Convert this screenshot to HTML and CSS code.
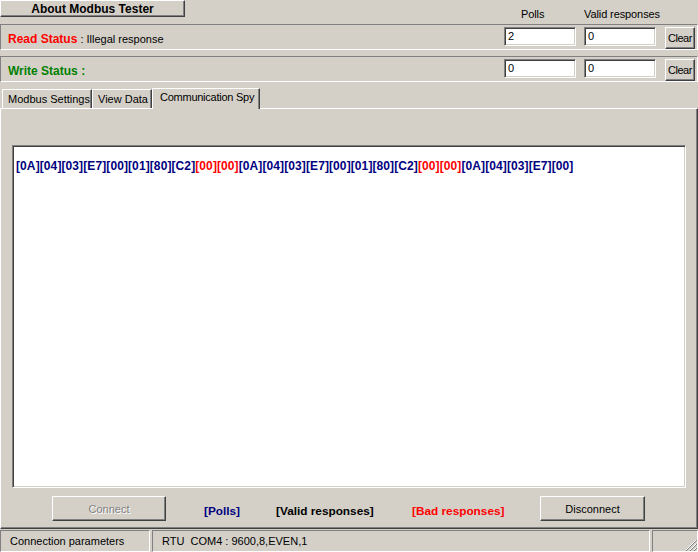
FILE: index.html
```html
<!DOCTYPE html>
<html lang="en">
<head>
    <meta charset="UTF-8">
    <title>Modbus Tester</title>
    <link rel="stylesheet" href="styles.css">
</head>
<body>
    <div class="window">
        <!-- top bar -->
        <div class="topbar">
            <button class="btn about">About Modbus Tester</button>
            <div class="counter-labels">
                <span class="counter-label">Polls</span>
                <span class="counter-label valid-label">Valid responses</span>
            </div>
        </div>

        <!-- read / write status -->
        <div class="status-panel">
            <div class="status-text"><b class="read-label">Read Status</b> : Illegal response</div>
            <div class="counters">
                <div class="field">2</div>
                <div class="field">0</div>
                <button class="btn clear">Clear</button>
            </div>
        </div>

        <div class="status-panel">
            <div class="status-text"><b class="write-label">Write Status :</b></div>
            <div class="counters">
                <div class="field">0</div>
                <div class="field">0</div>
                <button class="btn clear">Clear</button>
            </div>
        </div>

        <!-- tabs -->
        <div class="tabs">
            <div class="tab tab-settings">Modbus Settings</div>
            <div class="tab tab-data">View Data</div>
            <div class="tab active">Communication Spy</div>
        </div>

        <div class="tab-panel">
            <div class="spy-log">
                <div class="spy-line">[0A][04][03][E7][00][01][80][C2]<span class="bad">[00][00]</span>[0A][04][03][E7][00][01][80][C2]<span class="bad">[00][00]</span>[0A][04][03][E7][00]</div>
            </div>

            <div class="spy-actions">
                <button class="btn connect" disabled>Connect</button>
                <span class="legend polls">[Polls]</span>
                <span class="legend valid">[Valid responses]</span>
                <span class="legend badresp">[Bad responses]</span>
                <button class="btn disconnect">Disconnect</button>
            </div>
        </div>

        <!-- status bar -->
        <div class="statusbar">
            <div class="sb-panel sb-name">Connection parameters</div>
            <div class="sb-panel sb-params">RTU&nbsp; COM4 : 9600,8,EVEN,1</div>
            <div class="sb-panel sb-grip">
                <svg class="grip" width="12" height="12" viewBox="0 0 12 12">
                    <path d="M11 1L1 11M11 5L5 11M11 9L9 11" stroke="#ffffff" stroke-width="1"/>
                    <path d="M12 1L1 12M12 5L5 12M12 9L9 12" stroke="#808080" stroke-width="1"/>
                </svg>
            </div>
        </div>
    </div>
</body>
</html>
```

FILE: styles.css
```css
/* base */
body {
    margin: 0;
    background-color: #d4d0c8;
    font-family: 'Liberation Sans', Arial, sans-serif;
    font-size: 11px;
    color: #000000;
    overflow: hidden;
}

.window {
    width: 698px;
    height: 552px;
    display: flex;
    flex-direction: column;
}

/* classic raised button */
.btn {
    background-color: #d4d0c8;
    border: 1px solid;
    border-color: #ffffff #404040 #404040 #ffffff;
    box-shadow: inset -1px -1px #808080;
    font-family: inherit;
    font-size: 11px;
    color: #000000;
    padding: 0;
    margin: 0;
    white-space: nowrap;
}

/* top bar */
.topbar {
    height: 24px;
    display: flex;
    justify-content: space-between;
}

.about {
    width: 185px;
    height: 17px;
    font-size: 12px;
    font-weight: bold;
    line-height: 14px;
}

.counter-labels {
    display: flex;
    padding-top: 8px;
}

.counter-label {
    width: 63px;
    line-height: 13px;
    letter-spacing: -0.1px;
}

.valid-label {
    width: 114px;
}

/* status panels */
.status-panel {
    height: 24px;
    border: 1px solid;
    border-color: #808080 #ffffff #ffffff #808080;
    display: flex;
    justify-content: space-between;
    margin-bottom: 6px;
}

.status-text {
    padding: 7px 0 0 7px;
    line-height: 14px;
    font-size: 11px;
}

.status-text b {
    font-size: 12px;
}

.read-label {
    color: #ff0000;
}

.write-label {
    color: #008000;
}

.counters {
    display: flex;
    align-items: flex-start;
    padding-top: 2px;
    padding-right: 2px;
}

.field {
    width: 67px;
    height: 16px;
    margin-right: 8px;
    background-color: #ffffff;
    border: 1px solid;
    border-color: #808080 #ffffff #ffffff #808080;
    box-shadow: inset 1px 1px #404040, inset -1px -1px #d4d0c8;
    padding: 1px 0 0 3px;
    line-height: 15px;
    font-size: 11px;
}

.field + .field {
    margin-right: 9px;
}

.clear {
    width: 30px;
    height: 22px;
    letter-spacing: -0.5px;
    text-align: center;
}

/* tabs */
.tabs {
    display: flex;
    align-items: flex-end;
    height: 21px;
    margin-top: -1px;
    padding-left: 2px;
}

.tab {
    height: 19px;
    box-sizing: border-box;
    border: 1px solid;
    border-bottom: none;
    border-color: #ffffff #404040 transparent #ffffff;
    box-shadow: inset -1px 0 #808080;
    line-height: 18px;
    padding-left: 5px;
    white-space: nowrap;
}

.tab-settings {
    width: 90px;
}

.tab-data {
    width: 60px;
}

.tab.active {
    width: 108px;
    height: 21px;
    padding-left: 7px;
    line-height: 17px;
    letter-spacing: -0.25px;
    margin-bottom: -1px;
    background-color: #d4d0c8;
    position: relative;
}

/* tab page */
.tab-panel {
    height: 419px;
    border: 1px solid;
    border-color: #ffffff #404040 #404040 #ffffff;
    box-shadow: inset -1px -1px #808080;
    display: flex;
    flex-direction: column;
}

.spy-log {
    height: 341px;
    margin: 36px 11px 0 11px;
    background-color: #ffffff;
    border: 1px solid;
    border-color: #808080 #ffffff #ffffff #808080;
    box-shadow: inset 1px 1px #404040, inset -1px -1px #d4d0c8;
    padding: 0 2px;
}

.spy-line {
    margin-top: 13px;
    font-size: 12px;
    font-weight: bold;
    letter-spacing: 0.1px;
    line-height: 14px;
    color: #000080;
    padding-left: 1px;
}

.spy-line .bad {
    color: #ff0000;
}

.spy-actions {
    display: flex;
    align-items: center;
    height: 25px;
    margin-top: 8px;
}

.connect {
    width: 114px;
    height: 25px;
    margin-left: 51px;
    color: #808080;
    text-shadow: 1px 1px #ffffff;
}

.legend {
    font-size: 11.8px;
    font-weight: bold;
    padding-top: 4px;
    white-space: nowrap;
}

.polls {
    color: #000080;
    width: 36px;
    margin-left: 38px;
}

.valid {
    width: 97px;
    margin-left: 36px;
}

.badresp {
    color: #ff0000;
    width: 91px;
    margin-left: 39px;
}

.disconnect {
    width: 105px;
    height: 25px;
    margin-left: 37px;
}

/* status bar */
.statusbar {
    display: flex;
    height: 22px;
    margin-top: 1px;
}

.sb-panel {
    box-sizing: border-box;
    height: 22px;
    border: 1px solid;
    border-color: #808080 #ffffff #ffffff #808080;
    line-height: 20px;
    padding-left: 9px;
    margin-right: 2px;
}

.sb-name {
    width: 150px;
}

.sb-params {
    width: 498px;
}

.sb-grip {
    flex: 1;
    margin-right: 0;
    display: flex;
    justify-content: flex-end;
    align-items: flex-end;
    padding: 0;
}
```
